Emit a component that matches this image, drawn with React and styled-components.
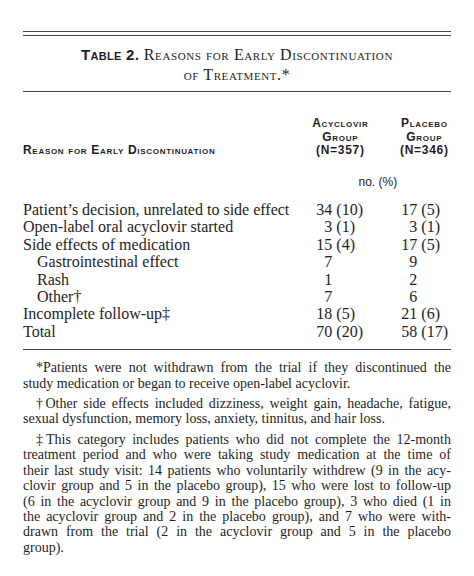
import React from "react";
import styled, { createGlobalStyle } from "styled-components";

const Global = createGlobalStyle`
  html, body { margin: 0; padding: 0; background: #fff; }
  body { color: #1e1e1e; font-family: "Liberation Serif", "Times New Roman", serif; }
`;

const Page = styled.div`
  width: 474px;
  box-sizing: border-box;
  padding: 31px 23px 20px;
`;

const DoubleRule = styled.div`
  height: 3px;
  border-top: 1px solid #444;
  border-bottom: 1px solid #444;
`;

const Rule = styled.div`
  border-top: 1px solid #444;
`;

const Title = styled.h1`
  margin: 9px 0 6px;
  text-align: center;
  font-weight: normal;
  font-family: "Liberation Serif", serif;
  font-size: 16px;
  line-height: 20px;
  font-variant: small-caps;
  letter-spacing: 0.6px;
`;

const TitleLabel = styled.span`
  font-family: "Liberation Sans", Arial, sans-serif;
  font-weight: bold;
  font-size: 15px;
  letter-spacing: 0.3px;
`;

const Table = styled.div`
  display: grid;
  grid-template-columns: 1fr 84px 66px;
  column-gap: 9px;
  margin-top: 25px;
  padding-bottom: 9px;
`;

const HeadCell = styled.div`
  font-family: "Liberation Sans", Arial, sans-serif;
  font-weight: bold;
  font-size: 12px;
  line-height: 13.5px;
  font-variant: small-caps;
  letter-spacing: 0.7px;
  text-align: ${(p) => (p.$center ? "center" : "left")};
  align-self: end;
`;

const Units = styled.div`
  grid-column: 2 / 4;
  margin-top: 18px;
  margin-bottom: 12px;
  text-align: center;
  font-family: "Liberation Sans", Arial, sans-serif;
  font-size: 12px;
  line-height: 13.5px;
`;

const LabelCell = styled.div`
  font-size: 16px;
  line-height: 17.4px;
  padding-left: ${(p) => (p.$sub ? 14 : 0)}px;
  white-space: nowrap;
`;

const NumCell = styled.div`
  font-size: 16px;
  line-height: 17.4px;
  white-space: nowrap;
`;

const Count = styled.span`
  display: inline-block;
  width: ${(p) => p.$w}px;
  text-align: right;
`;

const Pct = styled.span`
  margin-left: 4px;
`;

const Notes = styled.div`
  margin-top: 10px;
  font-size: 14px;
  line-height: 15.4px;
`;

const Note = styled.p`
  margin: 0 0 5px;
`;

const Line = styled.span`
  display: block;
  text-align: justify;
  text-align-last: ${(p) => (p.$last ? "left" : "justify")};
  text-indent: ${(p) => (p.$indent ? 13 : 0)}px;
  white-space: nowrap;
`;

const rows = [
  { label: "Patient’s decision, unrelated to side effect", a: ["34", "(10)"], p: ["17", "(5)"] },
  { label: "Open-label oral acyclovir started", a: ["3", "(1)"], p: ["3", "(1)"] },
  { label: "Side effects of medication", a: ["15", "(4)"], p: ["17", "(5)"] },
  { label: "Gastrointestinal effect", sub: true, a: ["7"], p: ["9"] },
  { label: "Rash", sub: true, a: ["1"], p: ["2"] },
  { label: "Other†", sub: true, a: ["7"], p: ["6"] },
  { label: "Incomplete follow-up‡", a: ["18", "(5)"], p: ["21", "(6)"] },
  { label: "Total", a: ["70", "(20)"], p: ["58", "(17)"] },
];

const notes = [
  [
    "*Patients were not withdrawn from the trial if they discontinued the",
    "study medication or began to receive open-label acyclovir.",
  ],
  [
    "†Other side effects included dizziness, weight gain, headache, fatigue,",
    "sexual dysfunction, memory loss, anxiety, tinnitus, and hair loss.",
  ],
  [
    "‡This category includes patients who did not complete the 12-month",
    "treatment period and who were taking study medication at the time of",
    "their last study visit: 14 patients who voluntarily withdrew (9 in the acy-",
    "clovir group and 5 in the placebo group), 15 who were lost to follow-up",
    "(6 in the acyclovir group and 9 in the placebo group), 3 who died (1 in",
    "the acyclovir group and 2 in the placebo group), and 7 who were with-",
    "drawn from the trial (2 in the acyclovir group and 5 in the placebo",
    "group).",
  ],
];

function Num({ value, w }) {
  return (
    <NumCell>
      <Count $w={w}>{value[0]}</Count>
      {value[1] && <Pct>{value[1]}</Pct>}
    </NumCell>
  );
}

export default function App() {
  return (
    <>
      <Global />
      <Page>
        <DoubleRule />
        <Title>
          <TitleLabel>Table 2.</TitleLabel> Reasons for Early Discontinuation
          <br />
          of Treatment.*
        </Title>
        <Rule />
        <Table>
          <HeadCell>Reason for Early Discontinuation</HeadCell>
          <HeadCell $center>
            Acyclovir
            <br />
            Group
            <br />
            (N=357)
          </HeadCell>
          <HeadCell $center>
            Placebo
            <br />
            Group
            <br />
            (N=346)
          </HeadCell>
          <div />
          <Units>no. (%)</Units>
          {rows.map((r) => (
            <React.Fragment key={r.label}>
              <LabelCell $sub={r.sub}>{r.label}</LabelCell>
              <Num value={r.a} w={34} />
              <Num value={r.p} w={26} />
            </React.Fragment>
          ))}
        </Table>
        <Rule />
        <Notes>
          {notes.map((lines, i) => (
            <Note key={i}>
              {lines.map((l, j) => (
                <Line key={j} $indent={j === 0} $last={j === lines.length - 1}>
                  {l}
                </Line>
              ))}
            </Note>
          ))}
        </Notes>
      </Page>
    </>
  );
}
